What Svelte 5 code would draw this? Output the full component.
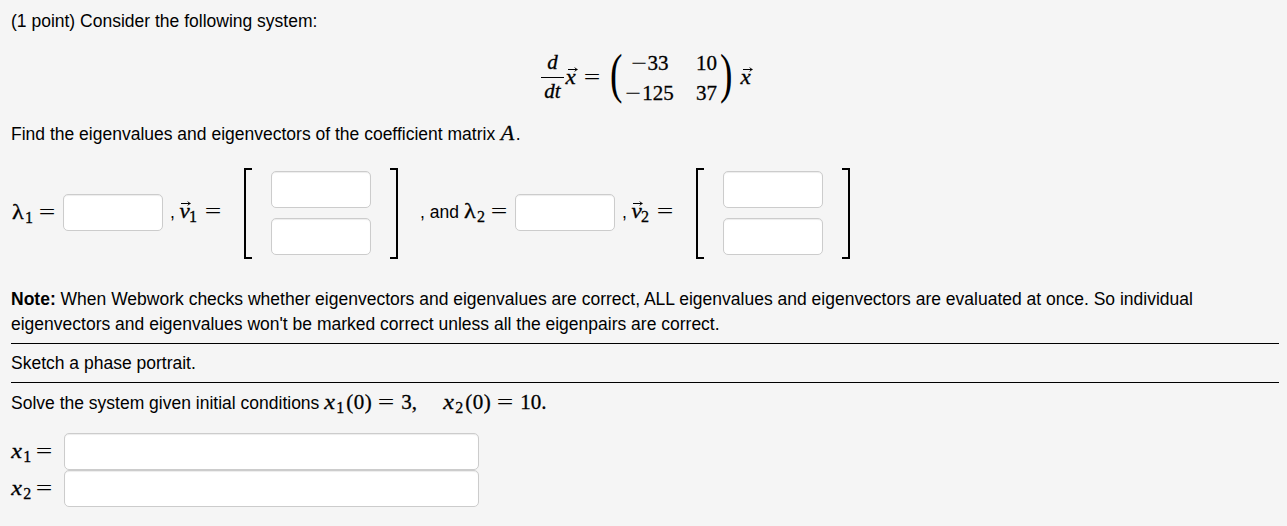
<script lang="ts">
  const matrix = [["−33", "10"], ["−125", "37"]];
  const pairs = [1, 2];

  let lambdas = $state(["", ""]);
  let vectors = $state([["", ""], ["", ""]]);
  let solutions = $state(["", ""]);
</script>

{#snippet vec(name)}
  <span class="vec">
    <i>{name}</i>
    <svg width="10" height="5" viewBox="0 0 10 5"><path d="M0 2.5H9M6.8 .5Q7.5 2.1 9.4 2.5Q7.5 2.9 6.8 4.5" /></svg>
  </span>
{/snippet}

<main>
  <p class="intro">(1 point) Consider the following system:</p>

  <div class="equation math">
    <span class="fraction"><i>d</i><i>dt</i></span>
    {@render vec("x")}
    <span class="eq">=</span>
    <span class="paren left">(</span>
    <span class="matrix">
      {#each matrix as row}
        {#each row as cell}
          <span>{#if cell[0] === "−"}<span class="minus">−</span>{cell.slice(1)}{:else}{cell}{/if}</span>
        {/each}
      {/each}
    </span>
    <span class="paren right">)</span>
    {@render vec("x")}
  </div>

  <p class="find">Find the eigenvalues and eigenvectors of the coefficient matrix <span class="math"><i class="coef">A</i></span>.</p>

  <div class="answers">
    {#each pairs as n, i}
      <span class="lambda" class:second={n === 2}>
        {#if n === 2}<span class="and">, and</span>{/if}
        <span class="math symbol"><span class="lam">λ</span><sub>{n}</sub></span>
        <span class="math eq">=</span>
      </span>
      <input class="short" type="text" aria-label="lambda {n}" bind:value={lambdas[i]} />
      <span class="vector">
        <span class="comma">,</span>
        <span class="math symbol">{@render vec("v")}<sub>{n}</sub></span>
        <span class="math eq">=</span>
      </span>
      <span class="bracket"></span>
      <span class="column">
        <input class="short" type="text" aria-label="v{n} first entry" bind:value={vectors[i][0]} />
        <input class="short" type="text" aria-label="v{n} second entry" bind:value={vectors[i][1]} />
      </span>
      <span class="bracket close"></span>
    {/each}
  </div>

  <p class="note">
    <b>Note:</b> When Webwork checks whether eigenvectors and eigenvalues are correct, ALL eigenvalues and eigenvectors are evaluated at once. So individual eigenvectors and eigenvalues won't be marked correct unless all the eigenpairs are correct.
  </p>
  <hr />
  <p class="sketch">Sketch a phase portrait.</p>
  <hr />
  <div class="solve">
    <span class="prompt">Solve the system given initial conditions</span>
    <span class="math condition"><i class="x">x</i><sub>1</sub><span class="arg">(0)</span><span class="eq">=</span><span>3,</span></span>
    <span class="math condition"><i class="x">x</i><sub>2</sub><span class="arg">(0)</span><span class="eq">=</span><span>10.</span></span>
  </div>

  {#each pairs as n, i}
    <div class="solution">
      <span class="math label"><i class="x">x</i><sub>{n}</sub><span class="eq">=</span></span>
      <input type="text" aria-label="x{n}" bind:value={solutions[i]} />
    </div>
  {/each}
</main>

<style>
  :global(body) {
    background: #f5f5f5;
  }
  main {
    box-sizing: border-box;
    height: 526px;
    padding: 9px 8px 0 11px;
    overflow: hidden;
    background: #f5f5f5;
    color: #000;
    font: 17.5px/25px "Liberation Sans", Arial, sans-serif;
  }
  p {
    margin: 0;
  }
  .math {
    font-family: "Liberation Serif", "Times New Roman", serif;
    font-size: 21px;
    -webkit-text-stroke: 0.3px #000;
  }
  sub {
    font-size: 16px;
    line-height: 0;
    vertical-align: -4px;
  }
  .eq {
    display: inline-block;
    width: 12px;
    text-align: center;
    transform: scaleX(1.4);
    -webkit-text-stroke: 0;
  }
  .minus {
    display: inline-block;
    margin-right: 3px;
    transform: scaleX(1.35);
    -webkit-text-stroke: 0;
  }
  .x {
    display: inline-block;
    transform: scaleX(1.15);
    margin: 0 2px 0 1px;
  }
  .coef {
    display: inline-block;
    margin: 0 2px 0 1px;
    transform: scaleX(1.05);
  }
  .vec {
    position: relative;
    display: inline-block;
    width: 12px;
  }
  .vec i {
    display: inline-block;
    transform: scaleX(1.1);
  }
  .vec svg {
    position: absolute;
    left: 2px;
    top: 2px;
    fill: none;
    stroke: #000;
    stroke-width: 1;
  }

  .intro {
    height: 36px;
  }
  .equation {
    display: flex;
    align-items: center;
    height: 64px;
    padding-left: 530px;
  }
  .equation .vec {
    left: 2px;
  }
  .fraction {
    display: grid;
    grid-template-rows: 29px 28px;
    width: 23px;
    text-align: center;
    line-height: 27px;
  }
  .fraction i:first-child {
    border-bottom: 1px solid #000;
  }
  .equation .eq {
    margin: 0 12px 0 10px;
  }
  .paren {
    width: 16px;
    margin-top: -6px;
    font-size: 55px;
    line-height: 58px;
    transform: scaleX(0.68);
    transform-origin: left;
    -webkit-text-stroke: 0;
  }
  .matrix {
    display: grid;
    grid-template-columns: 49px 23px;
    grid-template-rows: 30px 30px;
    column-gap: 20px;
    padding-top: 2px;
    line-height: 30px;
    text-align: center;
  }
  .paren.right {
    margin-left: 2px;
    margin-right: 3px;
  }

  .find {
    height: 59px;
    padding-top: 12px;
    box-sizing: border-box;
  }
  .answers {
    display: flex;
    align-items: center;
    height: 91px;
  }
  input {
    box-sizing: border-box;
    height: 37px;
    margin: 0;
    padding: 4px 6px;
    border: 1px solid #ccc;
    border-radius: 5px;
    background: #fff;
    box-shadow: inset 0 1px 1px rgba(0, 0, 0, 0.075);
    font: inherit;
    outline: none;
  }
  .short {
    width: 100px;
  }
  .answers > .short {
    margin-bottom: 2px;
  }
  .lambda,
  .vector {
    display: flex;
    align-items: baseline;
    box-sizing: border-box;
    flex: none;
    padding-bottom: 3px;
  }
  .lambda {
    width: 52px;
    padding-left: 2px;
  }
  .lambda.second {
    width: 117px;
    padding-left: 22px;
  }
  .and {
    margin-right: 6px;
  }
  .symbol {
    width: 28px;
    white-space: nowrap;
  }
  .lam {
    display: inline-block;
    width: 12px;
    transform: scaleX(1.15);
  }
  .vector {
    width: 80px;
    padding-left: 7px;
  }
  .comma {
    width: 10px;
  }
  .vector .symbol {
    width: 27px;
  }
  .vector .vec {
    width: 10px;
    margin-right: -1px;
  }
  .vector .vec svg {
    left: 1px;
  }
  .bracket {
    box-sizing: border-box;
    width: 8px;
    height: 91px;
    margin-left: 1px;
    border: solid #000;
    border-width: 2px 0 2px 2px;
  }
  .bracket.close {
    margin: 0;
    border-width: 2px 2px 2px 0;
  }
  .column {
    display: flex;
    flex-direction: column;
    gap: 10px;
    padding: 0 19px 2px;
  }

  .note {
    padding-top: 28px;
  }
  hr {
    height: 1px;
    margin: 6px 0;
    border: 0;
    background: #000;
  }
  .sketch {
    height: 26px;
    line-height: 27px;
  }
  .solve {
    display: flex;
    align-items: baseline;
    height: 44px;
    padding-top: 1px;
    box-sizing: border-box;
  }
  .prompt {
    width: 313px;
    white-space: nowrap;
  }
  .condition {
    width: 119px;
    white-space: nowrap;
  }
  .condition .eq {
    margin: 0 9px 0 8px;
  }
  .arg {
    margin-left: 2px;
    letter-spacing: 0.5px;
  }
  .solution {
    display: flex;
    align-items: center;
    height: 37px;
  }
  .label {
    width: 53px;
    padding-bottom: 1px;
  }
  .label .eq {
    margin-left: 7px;
  }
  .solution input {
    width: 415px;
  }
</style>
